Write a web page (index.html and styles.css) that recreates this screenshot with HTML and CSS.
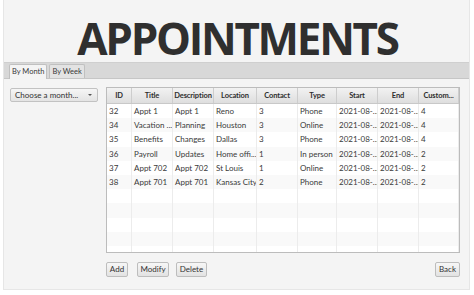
FILE: index.html
```html
<!DOCTYPE html>
<html>
<head>
<meta charset="utf-8">
<link rel="stylesheet" href="styles.css">
</head>
<body>
<div class="window">
  <div class="title">APPOINTMENTS</div>
  <div class="tabbar">
    <div class="tab active">By Month</div>
    <div class="tab">By Week</div>
  </div>
  <div class="content">
    <div class="side">
      <div class="combo"><span>Choose a month...</span><span class="arrow"></span></div>
    </div>
    <div class="main">
      <div class="grid">
        <div class="row head">
          <div class="c c1">ID</div><div class="c c2">Title</div><div class="c c3">Description</div><div class="c c4">Location</div><div class="c c5">Contact</div><div class="c c6">Type</div><div class="c c7">Start</div><div class="c c8">End</div><div class="c c9">Custom...</div>
        </div>
        <div class="row"><div class="c c1">32</div><div class="c c2">Appt 1</div><div class="c c3">Appt 1</div><div class="c c4">Reno</div><div class="c c5">3</div><div class="c c6">Phone</div><div class="c c7">2021-08-...</div><div class="c c8">2021-08-...</div><div class="c c9">4</div></div>
        <div class="row odd"><div class="c c1">34</div><div class="c c2">Vacation ...</div><div class="c c3">Planning</div><div class="c c4">Houston</div><div class="c c5">3</div><div class="c c6">Online</div><div class="c c7">2021-08-...</div><div class="c c8">2021-08-...</div><div class="c c9">4</div></div>
        <div class="row"><div class="c c1">35</div><div class="c c2">Benefits</div><div class="c c3">Changes</div><div class="c c4">Dallas</div><div class="c c5">3</div><div class="c c6">Phone</div><div class="c c7">2021-08-...</div><div class="c c8">2021-08-...</div><div class="c c9">4</div></div>
        <div class="row odd"><div class="c c1">36</div><div class="c c2">Payroll</div><div class="c c3">Updates</div><div class="c c4">Home offi...</div><div class="c c5">1</div><div class="c c6">In person</div><div class="c c7">2021-08-...</div><div class="c c8">2021-08-...</div><div class="c c9">2</div></div>
        <div class="row"><div class="c c1">37</div><div class="c c2">Appt 702</div><div class="c c3">Appt 702</div><div class="c c4">St Louis</div><div class="c c5">1</div><div class="c c6">Online</div><div class="c c7">2021-08-...</div><div class="c c8">2021-08-...</div><div class="c c9">2</div></div>
        <div class="row odd"><div class="c c1">38</div><div class="c c2">Appt 701</div><div class="c c3">Appt 701</div><div class="c c4">Kansas City</div><div class="c c5">2</div><div class="c c6">Phone</div><div class="c c7">2021-08-...</div><div class="c c8">2021-08-...</div><div class="c c9">2</div></div>
        <div class="row"><div class="c c1"></div><div class="c c2"></div><div class="c c3"></div><div class="c c4"></div><div class="c c5"></div><div class="c c6"></div><div class="c c7"></div><div class="c c8"></div><div class="c c9"></div></div>
        <div class="row odd"><div class="c c1"></div><div class="c c2"></div><div class="c c3"></div><div class="c c4"></div><div class="c c5"></div><div class="c c6"></div><div class="c c7"></div><div class="c c8"></div><div class="c c9"></div></div>
        <div class="row"><div class="c c1"></div><div class="c c2"></div><div class="c c3"></div><div class="c c4"></div><div class="c c5"></div><div class="c c6"></div><div class="c c7"></div><div class="c c8"></div><div class="c c9"></div></div>
        <div class="row odd"><div class="c c1"></div><div class="c c2"></div><div class="c c3"></div><div class="c c4"></div><div class="c c5"></div><div class="c c6"></div><div class="c c7"></div><div class="c c8"></div><div class="c c9"></div></div>
        <div class="row"><div class="c c1"></div><div class="c c2"></div><div class="c c3"></div><div class="c c4"></div><div class="c c5"></div><div class="c c6"></div><div class="c c7"></div><div class="c c8"></div><div class="c c9"></div></div>
      </div>
      <div class="buttons">
        <div class="btn b-add">Add</div>
        <div class="btn b-mod">Modify</div>
        <div class="btn b-del">Delete</div>
        <div class="spacer"></div>
        <div class="btn b-back">Back</div>
      </div>
    </div>
  </div>
</div>
</body>
</html>
```
FILE: styles.css
```css
html, body {
  margin: 0;
  padding: 0;
  background: #ffffff;
}
body {
  font-family: "Lato", "Open Sans", sans-serif;
  color: #333333;
  width: 474px;
  height: 295px;
  overflow: hidden;
}
.window {
  margin: 0 4px 0 3px;
  height: 290px;
  background: #f4f4f4;
  border: 1px solid #e6e6e6;
  border-top: none;
  box-sizing: border-box;
}
.title {
  height: 62px;
  display: flex;
  align-items: center;
  justify-content: center;
  font-family: "Open Sans", "Noto Sans", sans-serif;
  font-size: 44px;
  font-weight: 700;
  letter-spacing: -2.3px;
  color: #2f2f2f;
  padding-top: 13px;
  padding-left: 2px;
  box-sizing: border-box;
}
.tabbar {
  height: 17px;
  background: #d8d8d8;
  border-top: 1px solid #cfcfcf;
  border-bottom: 1px solid #c6c6c6;
  box-sizing: border-box;
  display: flex;
  align-items: flex-end;
  padding-left: 5px;
  gap: 2px;
}
.tab {
  font-size: 7.5px;
  color: #3a3a3a;
  height: 13px;
  line-height: 13px;
  padding: 0 2px;
  background: #e3e3e3;
  border: 1px solid #c0c0c0;
  border-bottom: none;
  border-radius: 2px 2px 0 0;
}
.tab.active {
  background: #f4f4f4;
  height: 14px;
  margin-bottom: -1px;
}
.content {
  display: flex;
  padding: 8px 9px 0 6px;
  gap: 8px;
}
.side {
  width: 89px;
  padding-top: 1px;
}
.combo {
  height: 14px;
  box-sizing: border-box;
  border: 1px solid #c2c2c2;
  border-radius: 2px;
  background: linear-gradient(#f6f6f6, #e4e4e4);
  display: flex;
  align-items: center;
  justify-content: space-between;
  padding: 0 4px 0 4px;
  font-size: 8px;
  color: #333;
}
.arrow {
  width: 0;
  height: 0;
  border-left: 2px solid transparent;
  border-right: 2px solid transparent;
  border-top: 2px solid #555;
  margin-right: 1px;
}
.main {
  flex: 1;
  display: flex;
  flex-direction: column;
}
.grid {
  height: 166px;
  border: 1px solid #bcbcbc;
  box-sizing: border-box;
  background: #ffffff;
  overflow: hidden;
}
.row {
  display: flex;
  height: 14.2px;
  align-items: stretch;
}
.row.odd {
  background: #f9f9f9;
}
.row.head {
  height: 15px;
  background: linear-gradient(#f2f2f2, #dedede);
  border-bottom: 1px solid #c8c8c8;
  font-weight: 700;
}
.c {
  font-size: 8px;
  line-height: 14px;
  padding-left: 2px;
  box-sizing: border-box;
  border-right: 1px solid #ececec;
  white-space: nowrap;
  overflow: hidden;
  color: #3a3a3a;
}
.head .c {
  font-size: 7.5px;
  letter-spacing: -0.1px;
  text-align: center;
  padding-left: 0;
  line-height: 15px;
  border-right: 1px solid #cdcdcd;
  color: #2e2e2e;
}
.c1 { width: 25px; }
.c2 { width: 41px; }
.c3 { width: 41px; }
.c4 { width: 43px; }
.c5 { width: 41px; }
.c6 { width: 39px; }
.c7 { width: 41px; }
.c8 { width: 41px; }
.c9 { width: 40px; }
.buttons {
  display: flex;
  margin-top: 9px;
}
.spacer { flex: 1; }
.btn {
  height: 15px;
  line-height: 13px;
  box-sizing: border-box;
  text-align: center;
  font-size: 8px;
  color: #333;
  border: 1px solid #bdbdbd;
  border-radius: 2px;
  background: linear-gradient(#f7f7f7, #e2e2e2);
}
.b-add { width: 22px; }
.b-mod { width: 32px; margin-left: 9px; }
.b-del { width: 31px; margin-left: 7px; }
.b-back { width: 25px; }
```
